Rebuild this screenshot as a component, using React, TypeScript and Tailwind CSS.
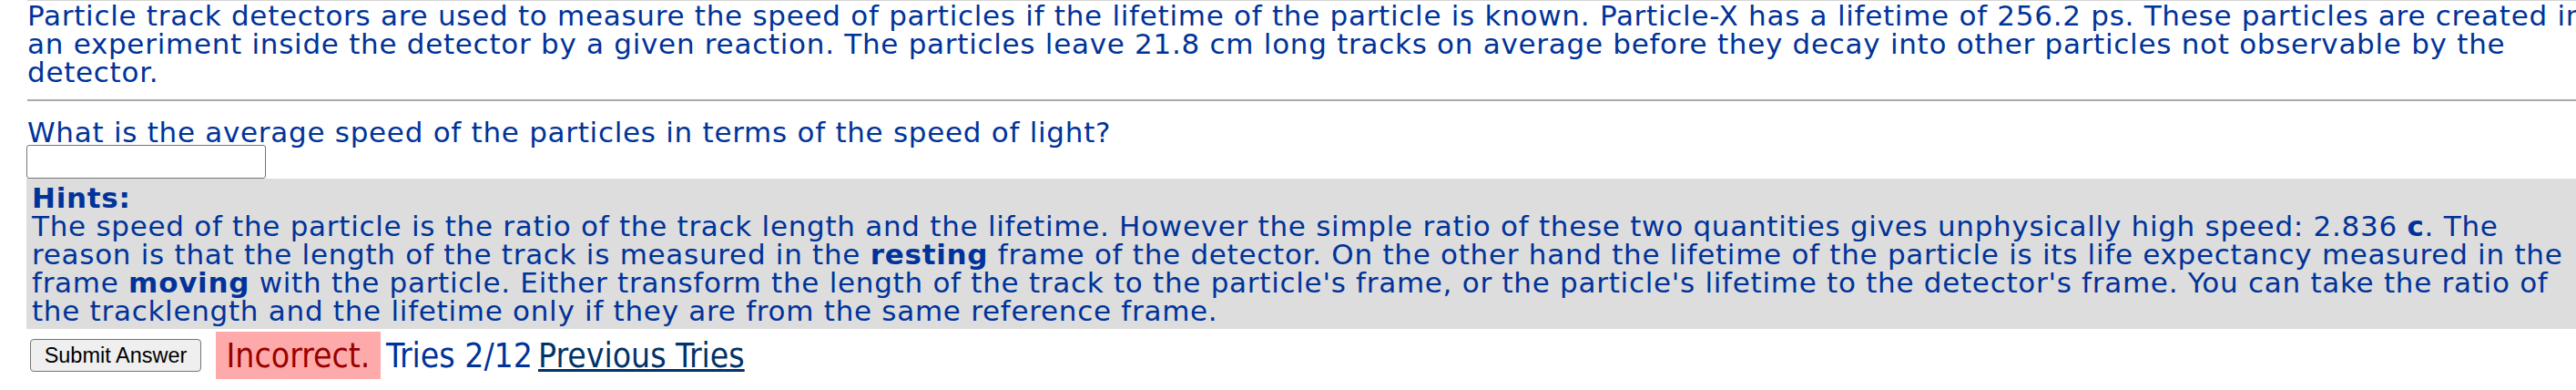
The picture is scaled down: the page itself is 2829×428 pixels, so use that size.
export default function App() {
  return (
    <div className="w-[2829px] h-[428px] overflow-hidden bg-white font-['DejaVu_Sans',Verdana,sans-serif] text-[31px] leading-[31px] tracking-[0.72px] text-[#003399]">
      <div className="ml-[30px] h-px bg-[#d4d4d4]" />
      <p className="pl-[30px] pt-[1.4px] whitespace-nowrap">
        Particle track detectors are used to measure the speed of particles if the lifetime of the particle is known.
        Particle-X has a lifetime of 256.2 ps. These particles are created in
        <br />
        an experiment inside the detector by a given reaction. The particles leave 21.8 cm long tracks on average before
        they decay into other particles not observable by the
        <br />
        detector.
      </p>
      <div className="ml-[30px] mt-[14px] h-[2px] bg-[#a8a8a8]" />

      <div className="pl-[30px] mt-[19px] whitespace-nowrap">
        What is the average speed of the particles in terms of the speed of light?
      </div>
      <div className="ml-[29px] -mt-[2px] w-[263px] h-[37px] rounded-[3px] border border-[#767676] bg-white" />

      <div className="ml-[29px] bg-[#dddddd] pl-[6px] pt-[6px] pb-[4px] whitespace-nowrap">
        <div className="font-bold">Hints:</div>
        <div>
          The speed of the particle is the ratio of the track length and the lifetime. However the simple ratio of these
          two quantities gives unphysically high speed: 2.836 <b>c</b>. The
          <br />
          reason is that the length of the track is measured in the <b>resting</b> frame of the detector. On the other
          hand the lifetime of the particle is its life expectancy measured in the
          <br />
          frame <b>moving</b> with the particle. Either transform the length of the track to the particle's frame, or the
          particle's lifetime to the detector's frame. You can take the ratio of
          <br />
          the tracklength and the lifetime only if they are from the same reference frame.
        </div>
      </div>

      <div className="ml-[33px] mt-[3px] flex items-center whitespace-nowrap font-['DejaVu_Sans_Condensed','Liberation_Sans',sans-serif] text-[37px] leading-none tracking-normal">
        <button className="w-[188px] h-[36px] rounded-[4px] border border-[#767676] bg-[#efefef] font-['Liberation_Sans',Arial,sans-serif] text-[23.5px] text-black">
          Submit Answer
        </button>
        <div className="ml-[16px] h-[52px] w-[181px] flex items-center justify-center bg-[#ffaaaa] text-[#990000]">
          Incorrect.
        </div>
        <span className="ml-[6px]">Tries 2/12</span>
        <a href="#" className="ml-[6px] text-[#003366] underline">
          Previous Tries
        </a>
      </div>
    </div>
  );
}
